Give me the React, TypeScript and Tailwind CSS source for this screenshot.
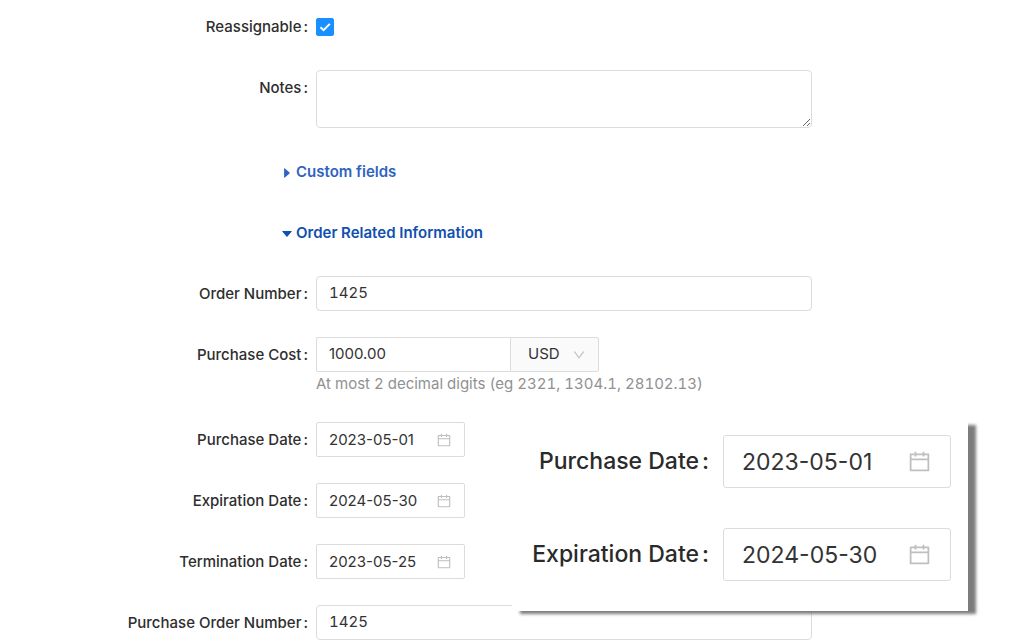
import { useState, type ReactNode } from "react";
import {
  AiFillCaretDown,
  AiFillCaretRight,
  AiOutlineCalendar,
  AiOutlineDown,
} from "react-icons/ai";

const fieldBorder = "border border-[#dcdcdc] bg-white outline-none focus:border-[#1890ff]";

function Row({ label, htmlFor, children }: { label: string; htmlFor: string; children: ReactNode }) {
  return (
    <div className="flex items-start gap-2">
      <label
        htmlFor={htmlFor}
        className="flex w-[308px] shrink-0 items-center justify-end gap-[2px] text-[15px] leading-[35px] font-medium text-[#2e2e2e]"
      >
        {label}
        <span>:</span>
      </label>
      <div className="min-w-0 flex-1">{children}</div>
    </div>
  );
}

function TextField({ id, value }: { id: string; value: string }) {
  return (
    <input
      id={id}
      type="text"
      defaultValue={value}
      className={`block h-[35px] w-full rounded-[4px] px-3 pb-[2px] text-[15px] tabular-nums ${fieldBorder}`}
    />
  );
}

function DateField({ id, value }: { id: string; value: string }) {
  return (
    <div className="flex h-[35px] w-[149px] items-center justify-between rounded-[2px] border border-[#dcdcdc] bg-white px-3">
      <input
        id={id}
        type="text"
        defaultValue={value}
        className="h-full w-full min-w-0 bg-transparent text-[15px] outline-none"
      />
      <AiOutlineCalendar className="size-4 shrink-0 text-[#bfbfbf]" aria-hidden="true" />
    </div>
  );
}

function SectionToggle({ title, open, color, onToggle }: { title: string; open: boolean; color: string; onToggle: () => void }) {
  return (
    <div className="flex pl-[280px]">
      <button
        type="button"
        aria-expanded={open}
        onClick={onToggle}
        className={`flex h-[35px] items-center gap-[2px] pt-[2px] text-[15px] font-semibold ${color}`}
      >
        {open ? (
          <AiFillCaretDown className="size-[14px]" aria-hidden="true" />
        ) : (
          <AiFillCaretRight className="size-[14px]" aria-hidden="true" />
        )}
        {title}
      </button>
    </div>
  );
}

function LargeDateRow({ id, label, value }: { id: string; label: string; value: string }) {
  return (
    <div className="flex items-center justify-end gap-[14px]">
      <label htmlFor={id} className="flex gap-[3px] text-[23px] font-medium whitespace-nowrap text-[#2a2a2a]">
        {label}
        <span>:</span>
      </label>
      <div className="flex h-[53px] w-[228px] shrink-0 items-center rounded-[3px] border border-[#dcdcdc] bg-white px-[18px]">
        <input
          id={id}
          type="text"
          defaultValue={value}
          className="h-full w-full min-w-0 bg-transparent text-[23px] text-[#333333] outline-none"
        />
        <AiOutlineCalendar className="size-[25px] shrink-0 text-[#bfbfbf]" aria-hidden="true" />
      </div>
    </div>
  );
}

export default function App() {
  const [customOpen, setCustomOpen] = useState(false);
  const [orderOpen, setOrderOpen] = useState(true);

  return (
    <main className="relative min-h-screen bg-white font-['Inter','Liberation_Sans',sans-serif] text-[15px] text-[#333333]">
      <form className="flex flex-col gap-[26px] pt-[9px] pr-[212px]">
        <Row label="Reassignable" htmlFor="reassignable">
          <span className="grid h-[35px] w-[18px] items-center">
            <input
              id="reassignable"
              type="checkbox"
              defaultChecked
              className="peer col-start-1 row-start-1 size-[18px] appearance-none rounded-[2px] border border-[#d0d0d0] checked:border-[#1890ff] checked:bg-[#1890ff]"
            />
            <svg
              viewBox="0 0 18 18"
              className="pointer-events-none invisible col-start-1 row-start-1 size-[18px] peer-checked:visible"
              fill="none"
              stroke="white"
              strokeWidth="2"
              aria-hidden="true"
            >
              <path d="M4.5 9.2 7.6 12.2 13.8 5.9" />
            </svg>
          </span>
        </Row>

        <Row label="Notes" htmlFor="notes">
          <textarea
            id="notes"
            className={`block h-[58px] w-full resize-y rounded-[4px] px-3 py-1 text-[15px] ${fieldBorder}`}
          />
        </Row>

        <SectionToggle
          title="Custom fields"
          open={customOpen}
          color="text-[#2f63c0]"
          onToggle={() => setCustomOpen(!customOpen)}
        />
        <SectionToggle
          title="Order Related Information"
          open={orderOpen}
          color="text-[#0f50b0]"
          onToggle={() => setOrderOpen(!orderOpen)}
        />

        {orderOpen && (
          <>
            <Row label="Order Number" htmlFor="order-number">
              <TextField id="order-number" value="1425" />
            </Row>
            <Row label="Purchase Cost" htmlFor="purchase-cost">
              <div className="flex">
                <input
                  id="purchase-cost"
                  type="text"
                  defaultValue="1000.00"
                  className={`h-[35px] w-[194px] rounded-l-[2px] border-r-0 px-3 pb-[2px] text-[15px] ${fieldBorder}`}
                />
                <div className="grid h-[35px] w-[89px] items-center rounded-r-[2px] border border-[#dcdcdc] bg-[#fafafa]">
                  <select
                    aria-label="Currency"
                    className="col-start-1 row-start-1 h-full w-full appearance-none bg-transparent pl-[17px] text-[15px] outline-none"
                  >
                    <option>USD</option>
                    <option>EUR</option>
                    <option>GBP</option>
                  </select>
                  <AiOutlineDown
                    className="pointer-events-none col-start-1 row-start-1 mr-3 size-[14px] justify-self-end text-[#bfbfbf]"
                    aria-hidden="true"
                  />
                </div>
              </div>
              <p className="h-6 text-[15px] leading-6 text-[#919191] tabular-nums">
                At most 2 decimal digits (eg 2321, 1304.1, 28102.13)
              </p>
            </Row>
            <Row label="Purchase Date" htmlFor="purchase-date">
              <DateField id="purchase-date" value="2023-05-01" />
            </Row>
            <Row label="Expiration Date" htmlFor="expiration-date">
              <DateField id="expiration-date" value="2024-05-30" />
            </Row>
            <Row label="Termination Date" htmlFor="termination-date">
              <DateField id="termination-date" value="2023-05-25" />
            </Row>
            <Row label="Purchase Order Number" htmlFor="po-number">
              <TextField id="po-number" value="1425" />
            </Row>
          </>
        )}
      </form>

      <section
        aria-label="Dates"
        className="absolute top-[422px] left-[512px] flex w-[456px] flex-col gap-10 bg-white pt-[13px] pr-[17px] pb-[30px] shadow-[8px_3px_3px_#7c7c7c]"
      >
        <LargeDateRow id="purchase-date-large" label="Purchase Date" value="2023-05-01" />
        <LargeDateRow id="expiration-date-large" label="Expiration Date" value="2024-05-30" />
      </section>
    </main>
  );
}
